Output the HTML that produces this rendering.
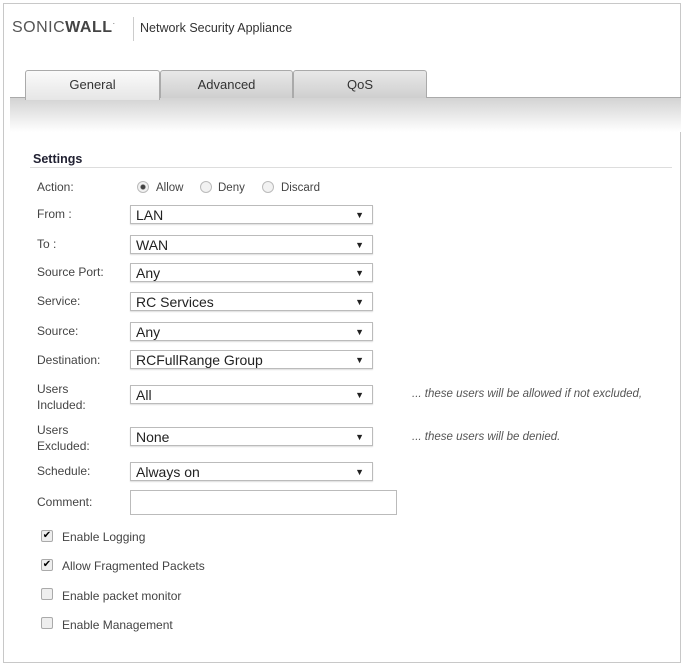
<!DOCTYPE html>
<html><head><style>
body{margin:0;width:686px;height:667px;background:#fff;font-family:"Liberation Sans",sans-serif;position:relative;overflow:hidden}
.a{position:absolute;white-space:nowrap}
.frame{left:3px;top:3px;width:676px;height:658px;border:1px solid #c8c8c8}
.tab{top:70px;height:27px;border:1px solid #aaa;border-bottom:none;border-radius:3px 3px 0 0;background:linear-gradient(#e8e8e8,#cfcfcf);font-size:13px;color:#333;text-align:center;line-height:27px}
.lbl{left:37px;font-size:12px;color:#444}
.sel{left:130px;width:243px;height:19px;border:1px solid #bbb;background:#fff;font-size:14px;color:#222;line-height:19px;padding-left:5px;box-sizing:border-box;box-shadow:0 1px 1px #ddd}
.sel:after{content:"▼";position:absolute;right:8px;top:0;font-size:9px}
.rad{width:10px;height:10px;border:1px solid #bbb;border-radius:50%;background:#f2f2f2}
.cb{left:41px;width:10px;height:10px;border:1px solid #aaa;border-radius:2px;background:#eee;font-size:10px;line-height:10px;text-align:center}
.ct{left:62px;font-size:12px;color:#444}
.note{font-size:11.5px;font-style:italic;color:#555;left:412px}
</style></head><body>
<div class="a frame"></div>
<div class="a" style="left:12px;top:19px;font-size:16px;color:#555;letter-spacing:0.5px">SONIC<b style="color:#444">WALL</b><span style="font-size:8px;vertical-align:top">·</span></div>
<div class="a" style="left:133px;top:17px;width:1px;height:24px;background:#ccc"></div>
<div class="a" style="left:140px;top:21px;font-size:12.5px;color:#333">Network Security Appliance</div>
<div class="a" style="left:10px;top:97px;width:671px;height:34px;background:linear-gradient(#d3d3d3,#fff);border-top:1px solid #aaa"></div>
<div class="a tab" style="left:25px;width:133px;height:29px;background:linear-gradient(#fafafa,#e6e6e6)">General</div>
<div class="a tab" style="left:160px;width:131px">Advanced</div>
<div class="a tab" style="left:293px;width:132px">QoS</div>
<div class="a" style="left:33px;top:152px;font-size:12.5px;font-weight:bold;color:#223">Settings</div>
<div class="a" style="left:30px;top:167px;width:642px;height:1px;background:#ddd"></div>
<div class="a lbl" style="top:180px">Action:</div>
<div class="a rad" style="left:137px;top:181px;background:radial-gradient(#444 2px,#f2f2f2 3px)"></div>
<div class="a" style="left:156px;top:182px;font-size:11.5px;color:#444">Allow</div>
<div class="a rad" style="left:200px;top:181px"></div>
<div class="a" style="left:218px;top:182px;font-size:11.5px;color:#444">Deny</div>
<div class="a rad" style="left:262px;top:181px"></div>
<div class="a" style="left:281px;top:182px;font-size:11.5px;color:#444">Discard</div>
<div class="a lbl" style="top:207px">From :</div><div class="a sel" style="top:205px">LAN</div>
<div class="a lbl" style="top:237px">To :</div><div class="a sel" style="top:235px">WAN</div>
<div class="a lbl" style="top:265px">Source Port:</div><div class="a sel" style="top:263px">Any</div>
<div class="a lbl" style="top:294px">Service:</div><div class="a sel" style="top:292px">RC Services</div>
<div class="a lbl" style="top:324px">Source:</div><div class="a sel" style="top:322px">Any</div>
<div class="a lbl" style="top:353px">Destination:</div><div class="a sel" style="top:350px">RCFullRange Group</div>
<div class="a lbl" style="top:381px;line-height:16px">Users<br>Included:</div><div class="a sel" style="top:385px">All</div>
<div class="a note" style="top:388px">... these users will be allowed if not excluded,</div>
<div class="a lbl" style="top:422px;line-height:16px">Users<br>Excluded:</div><div class="a sel" style="top:427px">None</div>
<div class="a note" style="top:431px">... these users will be denied.</div>
<div class="a lbl" style="top:464px">Schedule:</div><div class="a sel" style="top:462px">Always on</div>
<div class="a lbl" style="top:495px">Comment:</div>
<div class="a" style="left:130px;top:490px;width:265px;height:23px;border:1px solid #bbb"></div>
<div class="a cb" style="top:530px">✔</div><div class="a ct" style="top:530px">Enable Logging</div>
<div class="a cb" style="top:559px">✔</div><div class="a ct" style="top:559px">Allow Fragmented Packets</div>
<div class="a cb" style="top:588px"></div><div class="a ct" style="top:589px">Enable packet monitor</div>
<div class="a cb" style="top:617px"></div><div class="a ct" style="top:618px">Enable Management</div>
</body></html>
